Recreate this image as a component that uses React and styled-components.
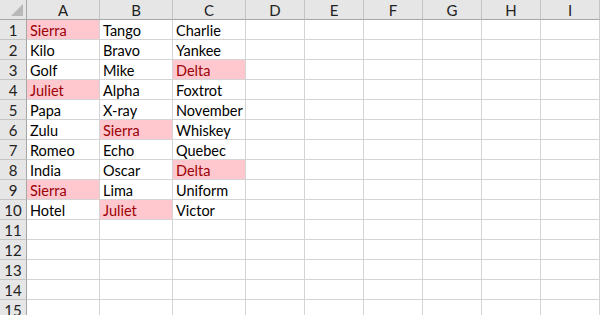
import React from 'react'
import styled, { createGlobalStyle } from 'styled-components'

const GlobalStyle = createGlobalStyle`
  body {
    margin: 0;
    background: #ffffff;
    font-family: "Lato", "Liberation Sans", sans-serif;
  }
`;

const Sheet = styled.div`
  width: 600px;
  height: 315px;
  overflow: hidden;
  display: grid;
  grid-template-columns: 27px 73px 73px 73px repeat(6, 59px);
  grid-auto-rows: 20px;
  background: #ffffff;
`;

const Corner = styled.div`
  position: relative;
  background: #e6e6e6;
  border-right: 1px solid #a6a6a6;
  border-bottom: 1px solid #a6a6a6;
  box-sizing: border-box;

  &::after {
    content: '';
    position: absolute;
    right: 3px;
    bottom: 3px;
    width: 0;
    height: 0;
    border-left: 12px solid transparent;
    border-bottom: 12px solid #b8b8b8;
  }
`;

const ColHead = styled.div`
  display: flex;
  align-items: center;
  justify-content: center;
  background: #e6e6e6;
  border-right: 1px solid #c4c4c4;
  border-bottom: 1px solid #a6a6a6;
  box-sizing: border-box;
  font-size: 15px;
  color: #222;
`;

const RowHead = styled.div`
  display: flex;
  align-items: center;
  justify-content: center;
  background: #e6e6e6;
  border-right: 1px solid #a6a6a6;
  border-bottom: 1px solid #c4c4c4;
  box-sizing: border-box;
  font-size: 15px;
  color: #222;
`;

const Cell = styled.div`
  display: flex;
  align-items: center;
  padding: 1px 0 0 3px;
  border-right: 1px solid #d4d4d4;
  border-bottom: 1px solid #d4d4d4;
  box-sizing: border-box;
  font-size: 14.5px;
  white-space: nowrap;
  overflow: hidden;
  background: ${p => (p.$dup ? '#ffc7ce' : '#ffffff')};
  color: ${p => (p.$dup ? '#9c0006' : '#000000')};
`;

const columns = ['A', 'B', 'C', 'D', 'E', 'F', 'G', 'H', 'I'];

const data = [
  ['Sierra', 'Tango', 'Charlie'],
  ['Kilo', 'Bravo', 'Yankee'],
  ['Golf', 'Mike', 'Delta'],
  ['Juliet', 'Alpha', 'Foxtrot'],
  ['Papa', 'X-ray', 'November'],
  ['Zulu', 'Sierra', 'Whiskey'],
  ['Romeo', 'Echo', 'Quebec'],
  ['India', 'Oscar', 'Delta'],
  ['Sierra', 'Lima', 'Uniform'],
  ['Hotel', 'Juliet', 'Victor'],
];

// highlight values that appear more than once in A1:C10
const counts = {};
data.flat().forEach(v => { counts[v] = (counts[v] || 0) + 1; });

const App = () => {
  const rows = [];
  for (let r = 0; r < 15; r++) {
    rows.push(<RowHead key={'h' + r}>{r + 1}</RowHead>);
    columns.forEach((c, ci) => {
      const value = data[r] && data[r][ci] ? data[r][ci] : '';
      rows.push(
        <Cell key={c + r} $dup={value && counts[value] > 1}>
          {value}
        </Cell>
      );
    });
  }

  return (
    <>
      <GlobalStyle />
      <Sheet>
        <Corner />
        {columns.map(c => <ColHead key={c}>{c}</ColHead>)}
        {rows}
      </Sheet>
    </>
  )
}

export default App
